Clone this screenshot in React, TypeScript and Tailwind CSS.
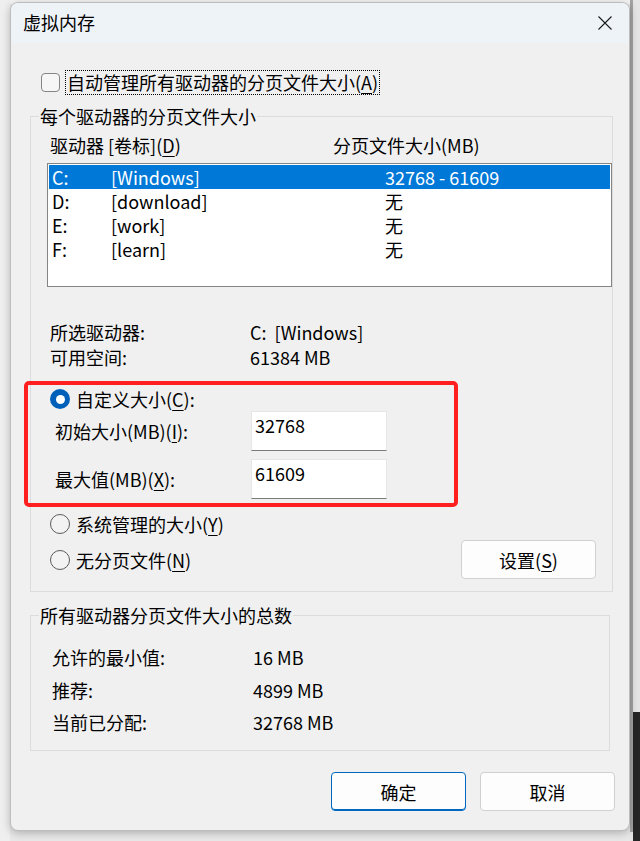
import type { ReactNode } from "react";

const U = ({ children }: { children: ReactNode }) => (
    <span className="underline decoration-1 underline-offset-[3px]">{children}</span>
);

const Radio = ({ checked }: { checked?: boolean }) =>
    checked ? (
        <span className="flex h-[20px] w-[20px] shrink-0 items-center justify-center rounded-full bg-[#005fb8]">
            <span className="h-[9px] w-[9px] rounded-full bg-white" />
        </span>
    ) : (
        <span className="h-[20px] w-[20px] shrink-0 rounded-full border border-[#5c5c5c] bg-[#f3f3f3]" />
    );

const drives = [
    { letter: "C:", label: "[Windows]", size: "32768 - 61609", selected: true },
    { letter: "D:", label: "[download]", size: "无" },
    { letter: "E:", label: "[work]", size: "无" },
    { letter: "F:", label: "[learn]", size: "无" },
];

const totals = [
    { label: "允许的最小值:", value: "16 MB", mt: "mt-[18px]" },
    { label: "推荐:", value: "4899 MB", mt: "mt-[9px]" },
    { label: "当前已分配:", value: "32768 MB", mt: "mt-[8px]" },
];

const SizeInput = ({ label, value }: { label: ReactNode; value: string }) => (
    <div className="flex h-[40px] items-center pl-[24px]">
        <span className="w-[196px] leading-[24px]">{label}</span>
        <div className="h-[40px] w-[136px] border border-[#e6e6e6] border-b-[#7a7a7a] bg-white pl-[3px] pt-[1px] leading-[24px]">
            {value}
        </div>
    </div>
);

export default function App() {
    return (
        <div className="relative h-[841px] w-[640px] overflow-hidden bg-[#e8e8e8] font-['Noto_Sans_CJK_SC',sans-serif] text-[18px] text-black">
            {/* desktop behind the dialog */}
            <div className="absolute left-0 top-0 h-[4px] w-[640px] bg-[#f4f4f4]" />
            <div className="absolute left-0 top-0 h-[841px] w-[10px] bg-[#efefef]" />
            <div className="absolute right-0 top-0 h-[841px] w-[10px] bg-[#e4e4e4]" />
            <div className="absolute right-[7px] top-0 h-[832px] w-[3px] bg-[#a3a3a3]" />
            <div className="absolute right-0 top-[712px] h-[129px] w-[7px] bg-[#252525]" />

            <div className="relative ml-[10px] mt-[2px] flex h-[829px] w-[620px] flex-col overflow-hidden rounded-[8px] border border-[#bdbdbd] bg-[#f0f0f0] shadow-[0_2px_8px_rgba(0,0,0,0.25)]">
                {/* title bar */}
                <div className="flex h-[40px] shrink-0 items-center justify-between bg-[#eef3f8] pb-[3px] pl-[12px] pr-[17px]">
                    <span className="leading-[24px]">虚拟内存</span>
                    <svg width="14" height="14" viewBox="0 0 14 14" fill="none" className="mt-[3px]">
                        <path d="M0.5 0.5L13.5 13.5M13.5 0.5L0.5 13.5" stroke="#1b1b1b" strokeWidth="1.1" />
                    </svg>
                </div>

                {/* auto manage */}
                <div className="ml-[30px] mt-[27px] flex h-[25px] items-center">
                    <span className="h-[19px] w-[19px] rounded-[4px] border border-[#858585] bg-[#f6f6f6]" />
                    <span className="ml-[5px] h-[25px] border border-dotted border-black px-[1px] leading-[22px]">
                        自动管理所有驱动器的分页文件大小(<U>A</U>)
                    </span>
                </div>

                {/* per drive */}
                <fieldset className="ml-[19px] mt-[9px] w-[580px] border border-[#dcdcdc] pb-[12px]">
                    <legend className="ml-[8px] px-[1px] leading-[24px]">每个驱动器的分页文件大小</legend>
                    <div className="mt-[5px] flex h-[24px] pl-[19px] leading-[24px]">
                        <span className="w-[283px]">
                            驱动器 [卷标](<U>D</U>)
                        </span>
                        <span>分页文件大小(MB)</span>
                    </div>
                    <div className="ml-[16px] mt-[6px] h-[124px] w-[565px] border border-[#848484] bg-white p-[1px]">
                        {drives.map((d) => (
                            <div
                                key={d.letter}
                                className={`flex h-[24px] pl-[3px] leading-[25px] ${d.selected ? "bg-[#0078d7] text-white" : ""}`}
                            >
                                <span className="w-[59px]">{d.letter}</span>
                                <span className="w-[274px]">{d.label}</span>
                                <span>{d.size}</span>
                            </div>
                        ))}
                    </div>

                    <div className="mt-[33px] flex h-[25px] pl-[19px] leading-[25px]">
                        <span className="w-[200px]">所选驱动器:</span>
                        <span className="whitespace-pre">C:  [Windows]</span>
                    </div>
                    <div className="flex h-[25px] pl-[19px] leading-[25px]">
                        <span className="w-[200px]">可用空间:</span>
                        <span>61384 MB</span>
                    </div>

                    <div className="mt-[17px] flex h-[24px] items-center gap-[6px] pl-[19px]">
                        <Radio checked />
                        <span className="leading-[24px]">
                            自定义大小(<U>C</U>):
                        </span>
                    </div>
                    <SizeInput label={<>初始大小(MB)(<U>I</U>):</>} value="32768" />
                    <div className="mt-[8px]">
                        <SizeInput label={<>最大值(MB)(<U>X</U>):</>} value="61609" />
                    </div>

                    <div className="mt-[13px] flex h-[24px] items-center gap-[6px] pl-[19px]">
                        <Radio />
                        <span className="leading-[24px]">
                            系统管理的大小(<U>Y</U>)
                        </span>
                    </div>
                    <div className="mt-[4px] flex h-[39px] items-center justify-between pl-[19px] pr-[16px]">
                        <div className="flex items-center gap-[6px]">
                            <Radio />
                            <span className="leading-[24px]">
                                无分页文件(<U>N</U>)
                            </span>
                        </div>
                        <button className="h-[39px] w-[135px] rounded-[4px] border border-[#d0d0d0] bg-[#fdfdfd] leading-[24px]">
                            设置(<U>S</U>)
                        </button>
                    </div>
                </fieldset>

                {/* totals */}
                <fieldset className="ml-[19px] mt-[11px] w-[580px] border border-[#dcdcdc] pb-[16px]">
                    <legend className="ml-[8px] px-[1px] leading-[24px]">所有驱动器分页文件大小的总数</legend>
                    {totals.map((t) => (
                        <div key={t.label} className={`${t.mt} flex h-[24px] pl-[21px] leading-[24px]`}>
                            <span className="w-[201px]">{t.label}</span>
                            <span>{t.value}</span>
                        </div>
                    ))}
                </fieldset>

                {/* dialog buttons */}
                <div className="mt-[21px] flex justify-end gap-[14px] pr-[14px]">
                    <button className="h-[39px] w-[135px] rounded-[4px] border border-[#0067c0] bg-[#fdfdfd] leading-[24px] shadow-[inset_0_-1px_0_#0067c0]">
                        确定
                    </button>
                    <button className="h-[39px] w-[135px] rounded-[4px] border border-[#d0d0d0] bg-[#fdfdfd] leading-[24px]">
                        取消
                    </button>
                </div>

                {/* annotation */}
                <div className="absolute left-[13px] top-[378px] h-[126px] w-[434px] rounded-[5px] border-4 border-[#ff1f1f]" />
            </div>
        </div>
    );
}
